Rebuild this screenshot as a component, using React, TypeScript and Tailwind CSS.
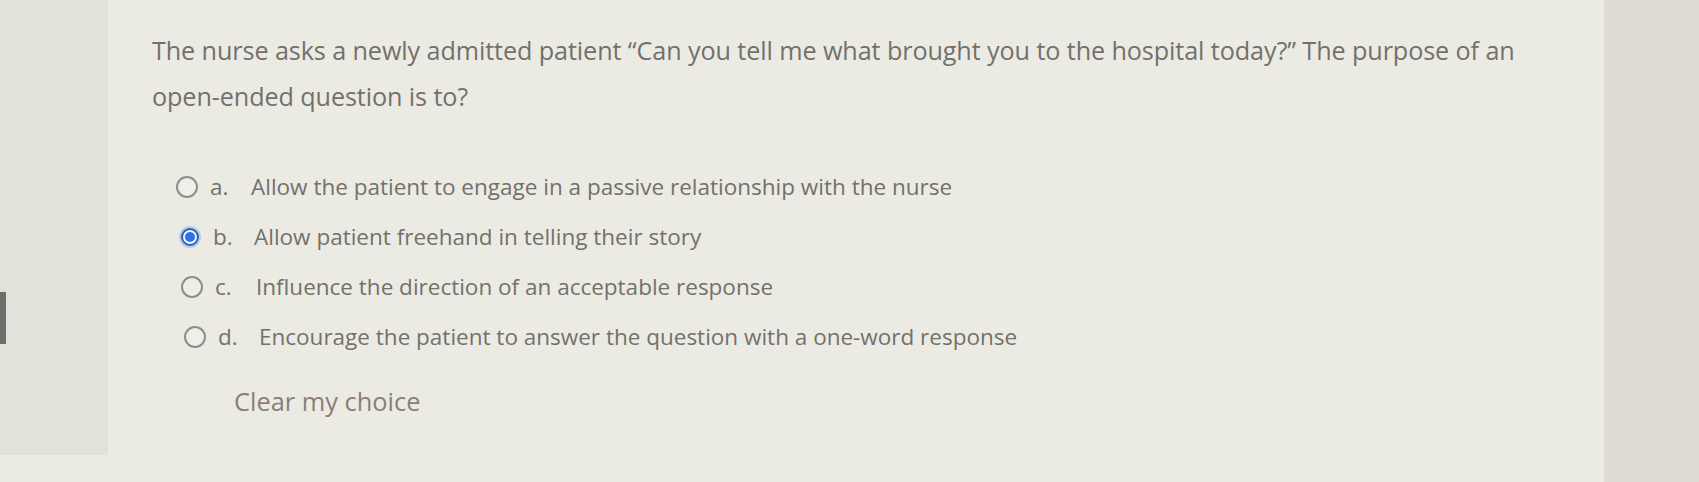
import React from "react";

const options = [
  { l: "a.", t: "Allow the patient to engage in a passive relationship with the nurse", checked: false, pad: "pl-0" },
  { l: "b.", t: "Allow patient freehand in telling their story", checked: true, pad: "pl-[3px]" },
  { l: "c.", t: "Influence the direction of an acceptable response", checked: false, pad: "pl-[5px]" },
  { l: "d.", t: "Encourage the patient to answer the question with a one-word response", checked: false, pad: "pl-[8px]" },
];

function Radio({ checked }: { checked: boolean }) {
  if (checked) {
    return (
      <span className="flex h-[22px] w-[22px] shrink-0 items-center justify-center rounded-full bg-[#b9cdf0]">
        <span className="flex h-[18px] w-[18px] items-center justify-center rounded-full border-[2px] border-[#2c5fb8] bg-[#f2f4f6]">
          <span className="h-[10px] w-[10px] rounded-full bg-[#2f73e3]" />
        </span>
      </span>
    );
  }
  return <span className="h-[22px] w-[22px] shrink-0 rounded-full border-[2px] border-[#8e8d89] bg-[#efeee8]" />;
}

export default function App() {
  return (
    <div
      className="flex h-[482px] w-full overflow-hidden bg-[#ecebe3]"
      style={{ fontFamily: '"Open Sans", "Noto Sans", sans-serif' }}
    >
      <div className="flex w-[108px] shrink-0 flex-col">
        <div className="relative flex-1 bg-[#e3e2da]">
          <div className="absolute left-0 top-[292px] h-[52px] w-[6px] bg-[#6e6d6a]" />
        </div>
        <div className="h-[27px] bg-[#ecebe4]" />
      </div>
      <div className="flex-1 pl-[44px] pt-[27px] text-[#72716c]">
        <p className="text-[25.2px] leading-[46px] tracking-[-0.1px]">
          The nurse asks a newly admitted patient “Can you tell me what brought you to the hospital today?” The purpose of an
          <br />
          open-ended question is to?
        </p>
        <div className="mt-[43px] flex flex-col pl-[24px]">
          {options.map((o) => (
            <div key={o.l} className={`flex h-[50px] items-center ${o.pad}`}>
              <Radio checked={o.checked} />
              <span className="ml-[12px] w-[41px] shrink-0 text-[22.5px]">{o.l}</span>
              <span className="text-[22.5px]">{o.t}</span>
            </div>
          ))}
          <div className="ml-[58px] mt-[23px] text-[25.4px] leading-[32px] text-[#8b7d78]">Clear my choice</div>
        </div>
      </div>
      <div className="w-[95px] shrink-0 bg-[#dedcd4]" />
    </div>
  );
}
